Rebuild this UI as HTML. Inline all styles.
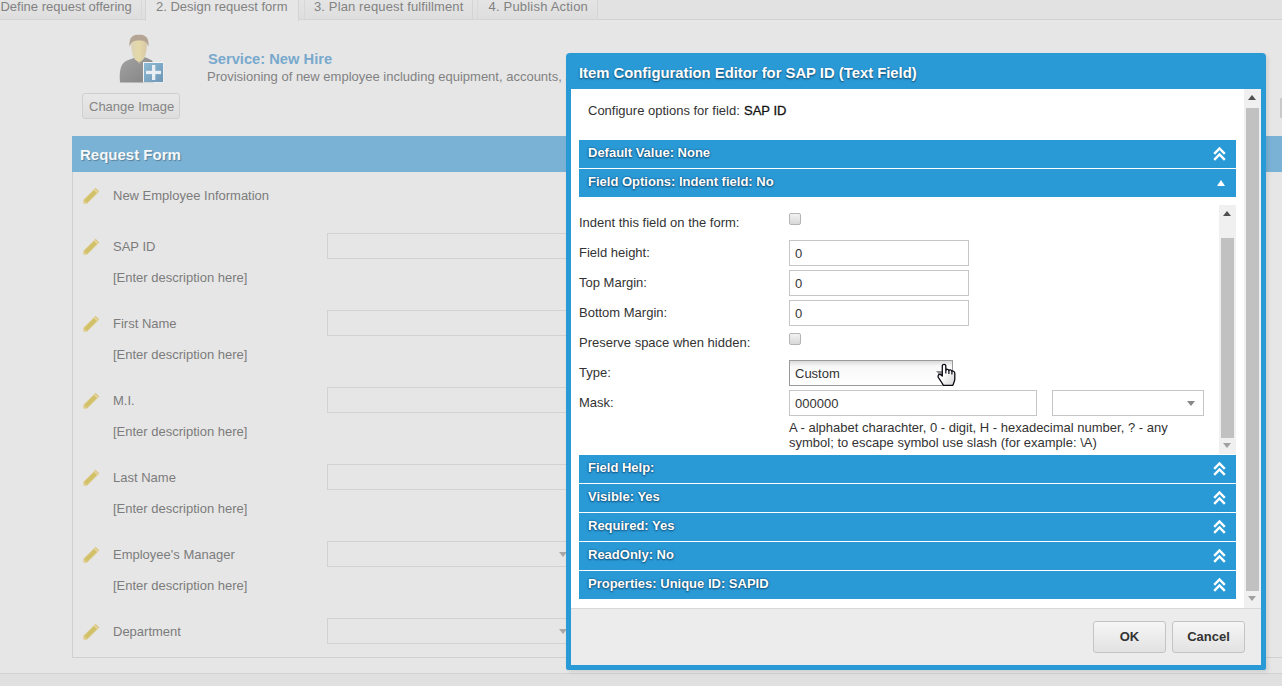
<!DOCTYPE html>
<html><head><meta charset="utf-8">
<style>
*{box-sizing:border-box;margin:0;padding:0}
html,body{width:1282px;height:686px;overflow:hidden}
body{background:#e6e6e6;font-family:"Liberation Sans",sans-serif;font-size:13px;position:relative;color:#7a7a7a}
.a{position:absolute}
.t{position:absolute;white-space:nowrap;font-size:13px;line-height:15px}
.b{font-weight:bold}
/* tabs */
#tabbar{position:absolute;left:0;top:0;width:1282px;height:20px;background:#e2e2e2;border-bottom:1px solid #d2d2d2}
.tab{position:absolute;top:0;height:20px;background:linear-gradient(#e4e4e4,#dedede);border:1px solid #d4d4d4;border-top:none}
.tabin{position:absolute;top:0;bottom:0;border-left:1px solid #d8d8d8}
.tabt{color:#828282}
/* left */
.lbl{color:#7c7c7c}
.inp{position:absolute;left:327px;width:260px;height:26px;border:1px solid #d2d2d2;background:#e6e6e6}
.sarr{position:absolute;width:0;height:0;border-left:4px solid transparent;border-right:4px solid transparent;border-top:5px solid #a8a8a8}
.pen{position:absolute;left:83px;width:17px;height:17px}
/* dialog */
#dlg{position:absolute;left:566px;top:53px;width:700px;height:617px;background:#2a9ad6;border-radius:4px 4px 2px 2px;box-shadow:2px 2px 4px rgba(0,0,0,.10)}
#dtitle{left:579px;top:64.5px;font-size:14.82px;line-height:17px;color:#fff;font-weight:bold;text-shadow:0 1px 2px rgba(10,50,80,.9)}
#content{position:absolute;left:571px;top:89px;width:690px;height:519px;background:#fff}
#footer{position:absolute;left:571px;top:608px;width:690px;height:57px;background:#ececec;border-top:1px solid #d8d8d8}
.hdr{position:absolute;left:579px;width:657px;height:28px;background:#2a9ad6}
.hdrt{position:absolute;left:9px;top:5px;font-size:13px;line-height:15px;font-weight:bold;color:#fff;text-shadow:0 0 2px rgba(0,45,80,.75),0 1px 2px rgba(0,45,80,.6);white-space:nowrap}
.dl{color:#333}
.din{position:absolute;left:789px;width:180px;height:26px;border:1px solid #c6c6c6;background:#fff}
.din span{position:absolute;left:5px;top:5px;font-size:13px;line-height:15px;color:#333}
.cb{position:absolute;left:789px;width:12px;height:12px;border:1px solid #b4b4b4;border-radius:2px;background:linear-gradient(#f2f2f2,#d8d8d8)}
.btn{position:absolute;top:621px;width:73px;height:32px;border:1px solid #c4c4c4;border-radius:3px;background:linear-gradient(#f6f6f6,#e2e2e2);color:#333;font-weight:bold;font-size:13px;text-align:center;line-height:30px}
.dchev{position:absolute;left:1213px;width:13px;height:15px}
</style></head><body>

<!-- tab bar -->
<div id="tabbar"></div>
<div class="tab" style="left:-10px;width:156px"><div class="tabin" style="left:150px"></div></div>
<div class="a" style="left:145px;top:0;width:154px;height:21px;background:#e6e6e6;border-left:1px solid #d4d4d4;border-right:1px solid #d4d4d4"></div>
<div class="tab" style="left:298px;width:175px"><div class="tabin" style="left:5px"></div></div>
<div class="tab" style="left:472px;width:126px"><div class="tabin" style="left:4px"></div></div>
<div class="t tabt" style="left:-14px;top:-1.5px">1. Define request offering</div>
<div class="t tabt" style="left:156px;top:-1.5px">2. Design request form</div>
<div class="t tabt" style="left:314px;top:-1.5px;letter-spacing:0.13px">3. Plan request fulfillment</div>
<div class="t tabt" style="left:488.5px;top:-1.5px;letter-spacing:0.2px">4. Publish Action</div>

<!-- service header -->
<svg class="a" style="left:112px;top:30px" width="56" height="56" viewBox="0 0 56 56">
  <defs>
   <linearGradient id="bodyg" x1="0" y1="0" x2="1" y2="1"><stop offset="0" stop-color="#a2a2a2"/><stop offset="1" stop-color="#838383"/></linearGradient>
   <linearGradient id="plusg" x1="0" y1="0" x2="1" y2="1"><stop offset="0" stop-color="#8cbad4"/><stop offset="1" stop-color="#6f97b6"/></linearGradient>
   <linearGradient id="faceg" x1="0" y1="0" x2="1" y2="0"><stop offset="0" stop-color="#dcd2b8"/><stop offset="0.5" stop-color="#e4d9a8"/><stop offset="1" stop-color="#d8c8a8"/></linearGradient>
  </defs>
  <path d="M8 52.5 C7 41 8.5 33 15 30.5 L23 27.5 L34 27.5 L40 30.5 C42.5 34 42.5 42 41.5 52.5 Z" fill="url(#bodyg)"/>
  <path d="M22 27.5 L27.5 34 L33 27.5 Z" fill="#b8b0a0"/>
  <path d="M19 10 C19 24 21 30 27 32 C33 30 35 24 35 10 Z" fill="url(#faceg)"/>
  <path d="M17.5 17 C16.5 6 22 4.8 27 4.8 C32 4.8 37.5 6 36.5 17 C35 12 33 10.5 27 10.5 C21 10.5 19 12 17.5 17 Z" fill="#b3a494"/>
  <rect x="31" y="32" width="20.5" height="20.5" fill="#f2f4f6"/>
  <rect x="32" y="33" width="19" height="19" fill="url(#plusg)"/>
  <rect x="40" y="35" width="3.3" height="15" fill="#e8eef2"/>
  <rect x="34" y="40.8" width="15" height="3.3" fill="#e8eef2"/>
</svg>
<div class="a" style="left:82px;top:93px;width:98px;height:26px;border:1px solid #cfcfcf;border-radius:3px;background:linear-gradient(#e8e8e8,#dedede)"></div>
<div class="t" style="left:89px;top:99px;color:#858585">Change Image</div>
<div class="t b" style="left:208px;top:51px;font-size:14.7px;line-height:16px;color:#78a9cd">Service: New Hire</div>
<div class="t" style="left:207px;top:69px;color:#828282">Provisioning of new employee including equipment, accounts, and access</div>

<!-- request form panel -->
<div class="a" style="left:72px;top:136px;width:1300px;height:522px;border:1px solid #d0d0d0;border-top:none"></div>
<div class="a" style="left:72px;top:136px;width:1300px;height:36px;background:#7ab2d5"></div>
<div class="t b" style="left:80px;top:146px;font-size:15px;line-height:17px;color:#f4f8fb;text-shadow:1px 1px 1px #5a7f96">Request Form</div>
<div class="a" style="left:0;top:673px;width:1282px;height:13px;background:#e0e0e0;border-top:1px solid #d2d2d2"></div>

<svg class="pen" style="top:187px" width="17" height="17" viewBox="0 0 17 17"><path d="M0.5 16.5 L0.5 12.8 L12.6 0.7 L16.3 4.4 L4.2 16.5 Z" fill="#d9c67c"/><path d="M3 14 L12.2 4.8" stroke="#d0c066" stroke-width="3"/><path d="M11.2 2.1 L14.9 5.8" stroke="#e6d6a6" stroke-width="1.4"/><path d="M0.8 16.2 L0.8 13.6 L3.4 16.2 Z" fill="#e2cf8c"/></svg>
<div class="t lbl" style="left:113px;top:188px">New Employee Information</div>
<svg class="pen" style="top:238px" width="17" height="17" viewBox="0 0 17 17"><path d="M0.5 16.5 L0.5 12.8 L12.6 0.7 L16.3 4.4 L4.2 16.5 Z" fill="#d9c67c"/><path d="M3 14 L12.2 4.8" stroke="#d0c066" stroke-width="3"/><path d="M11.2 2.1 L14.9 5.8" stroke="#e6d6a6" stroke-width="1.4"/><path d="M0.8 16.2 L0.8 13.6 L3.4 16.2 Z" fill="#e2cf8c"/></svg>
<div class="t lbl" style="left:113px;top:239px">SAP ID</div>
<div class="t lbl" style="left:113px;top:270px">[Enter description here]</div>
<div class="inp" style="top:233px"></div>
<svg class="pen" style="top:315px" width="17" height="17" viewBox="0 0 17 17"><path d="M0.5 16.5 L0.5 12.8 L12.6 0.7 L16.3 4.4 L4.2 16.5 Z" fill="#d9c67c"/><path d="M3 14 L12.2 4.8" stroke="#d0c066" stroke-width="3"/><path d="M11.2 2.1 L14.9 5.8" stroke="#e6d6a6" stroke-width="1.4"/><path d="M0.8 16.2 L0.8 13.6 L3.4 16.2 Z" fill="#e2cf8c"/></svg>
<div class="t lbl" style="left:113px;top:316px">First Name</div>
<div class="t lbl" style="left:113px;top:347px">[Enter description here]</div>
<div class="inp" style="top:310px"></div>
<svg class="pen" style="top:392px" width="17" height="17" viewBox="0 0 17 17"><path d="M0.5 16.5 L0.5 12.8 L12.6 0.7 L16.3 4.4 L4.2 16.5 Z" fill="#d9c67c"/><path d="M3 14 L12.2 4.8" stroke="#d0c066" stroke-width="3"/><path d="M11.2 2.1 L14.9 5.8" stroke="#e6d6a6" stroke-width="1.4"/><path d="M0.8 16.2 L0.8 13.6 L3.4 16.2 Z" fill="#e2cf8c"/></svg>
<div class="t lbl" style="left:113px;top:393px">M.I.</div>
<div class="t lbl" style="left:113px;top:424px">[Enter description here]</div>
<div class="inp" style="top:387px"></div>
<svg class="pen" style="top:469px" width="17" height="17" viewBox="0 0 17 17"><path d="M0.5 16.5 L0.5 12.8 L12.6 0.7 L16.3 4.4 L4.2 16.5 Z" fill="#d9c67c"/><path d="M3 14 L12.2 4.8" stroke="#d0c066" stroke-width="3"/><path d="M11.2 2.1 L14.9 5.8" stroke="#e6d6a6" stroke-width="1.4"/><path d="M0.8 16.2 L0.8 13.6 L3.4 16.2 Z" fill="#e2cf8c"/></svg>
<div class="t lbl" style="left:113px;top:470px">Last Name</div>
<div class="t lbl" style="left:113px;top:501px">[Enter description here]</div>
<div class="inp" style="top:464px"></div>
<svg class="pen" style="top:546px" width="17" height="17" viewBox="0 0 17 17"><path d="M0.5 16.5 L0.5 12.8 L12.6 0.7 L16.3 4.4 L4.2 16.5 Z" fill="#d9c67c"/><path d="M3 14 L12.2 4.8" stroke="#d0c066" stroke-width="3"/><path d="M11.2 2.1 L14.9 5.8" stroke="#e6d6a6" stroke-width="1.4"/><path d="M0.8 16.2 L0.8 13.6 L3.4 16.2 Z" fill="#e2cf8c"/></svg>
<div class="t lbl" style="left:113px;top:547px">Employee's Manager</div>
<div class="t lbl" style="left:113px;top:578px">[Enter description here]</div>
<div class="inp" style="top:541px"></div>
<div class="sarr" style="left:559px;top:552px"></div>
<svg class="pen" style="top:623px" width="17" height="17" viewBox="0 0 17 17"><path d="M0.5 16.5 L0.5 12.8 L12.6 0.7 L16.3 4.4 L4.2 16.5 Z" fill="#d9c67c"/><path d="M3 14 L12.2 4.8" stroke="#d0c066" stroke-width="3"/><path d="M11.2 2.1 L14.9 5.8" stroke="#e6d6a6" stroke-width="1.4"/><path d="M0.8 16.2 L0.8 13.6 L3.4 16.2 Z" fill="#e2cf8c"/></svg>
<div class="t lbl" style="left:113px;top:624px">Department</div>
<div class="inp" style="top:618px"></div>
<div class="sarr" style="left:559px;top:629px"></div>

<div class="a" style="left:1280px;top:98px;width:2px;height:20px;background:#c9c9c9;border-radius:1px 0 0 1px"></div>
<!-- dialog -->
<div id="dlg"></div>
<div class="t" id="dtitle">Item Configuration Editor for SAP ID (Text Field)</div>
<div id="content"></div>
<div id="footer"></div>
<div class="t dl" style="left:588px;top:103px">Configure options for field:</div>
<div class="t dl" style="left:744px;top:103px;color:#111;-webkit-text-stroke:0.3px #111">SAP ID</div>
<div class="a" style="left:1244px;top:89px;width:17px;height:519px;background:#f0f0f0"></div>
<div class="a" style="left:1246px;top:108px;width:13px;height:483px;background:#c1c1c1"></div>
<div class="sarr" style="left:1248px;top:95px;border-top:none;border-bottom:5px solid #505050"></div>
<div class="sarr" style="left:1248px;top:596px;border-top-color:#a0a0a0"></div>
<div class="hdr" style="top:140px"><div class="hdrt">Default Value: None</div></div><svg class="dchev" style="top:146px" width="13" height="15" viewBox="0 0 13 15"><path d="M1.2 7.8 L6.5 2.5 L11.8 7.8 M1.2 13.8 L6.5 8.5 L11.8 13.8" stroke="#fff" stroke-width="2.4" fill="none"/></svg>
<div class="hdr" style="top:169px"><div class="hdrt">Field Options: Indent field: No</div></div><div class="a" style="left:1217px;top:180px;width:0;height:0;border-left:4.5px solid transparent;border-right:4.5px solid transparent;border-bottom:6px solid #fff"></div>
<div class="a" style="left:1219px;top:205px;width:17px;height:249px;background:#f0f0f0"></div>
<div class="a" style="left:1221px;top:238px;width:13px;height:200px;background:#c1c1c1"></div>
<div class="sarr" style="left:1223px;top:211px;border-top:none;border-bottom:5px solid #505050"></div>
<div class="sarr" style="left:1223px;top:443px;border-top-color:#a0a0a0"></div>
<div class="t dl" style="left:579px;top:214.5px">Indent this field on the form:</div>
<div class="t dl" style="left:579px;top:244.5px">Field height:</div>
<div class="t dl" style="left:579px;top:274.5px">Top Margin:</div>
<div class="t dl" style="left:579px;top:304.5px">Bottom Margin:</div>
<div class="t dl" style="left:579px;top:334.5px">Preserve space when hidden:</div>
<div class="t dl" style="left:579px;top:364.5px">Type:</div>
<div class="t dl" style="left:579px;top:394.5px">Mask:</div>
<div class="cb" style="top:213px"></div>
<div class="cb" style="top:333px"></div>
<div class="din" style="top:240px"><span>0</span></div>
<div class="din" style="top:270px"><span>0</span></div>
<div class="din" style="top:300px"><span>0</span></div>
<div class="din" style="top:360px;width:164px;border-color:#9a9a9a;background:linear-gradient(#dadada,#f8f8f8 22%,#fff)"><span>Custom</span></div>
<div class="din" style="top:390px;width:248px"><span>000000</span></div>
<div class="din" style="left:1052px;top:390px;width:152px"></div>
<div class="sarr" style="left:1187px;top:401px;border-top-color:#888"></div>
<div class="t dl" style="left:789px;top:419.5px">A - alphabet charachter, 0 - digit, H - hexadecimal number, ? - any</div>
<div class="t dl" style="left:789px;top:434.5px">symbol; to escape symbol use slash (for example: \A)</div>
<div class="sarr" style="left:936px;top:371px;border-top-color:#8c8c8c"></div>
<svg class="a" style="left:930px;top:356px" width="32" height="34" viewBox="0 0 32 34"><defs><linearGradient id="hg" x1="0" y1="0" x2="1" y2="1"><stop offset="0.4" stop-color="#fff"/><stop offset="1" stop-color="#d4d4d4"/></linearGradient></defs><path d="M12.3 18 L12.3 9.8 C12.3 7.8 15.8 7.8 15.8 9.8 L15.8 14.2 C16.2 12.9 18.6 12.9 18.9 14.6 C19.3 13.6 21.6 13.6 21.9 15.4 C22.4 14.6 24.8 15.2 24.8 17.2 L24.8 23 C24.8 25.2 23.6 27.2 22.8 29.3 L13.3 29.3 C12.2 27 10.2 24.2 8.4 21.6 C7.6 20.2 8.3 18.3 9.8 18.4 C10.8 18.5 11.6 19.2 12.3 20 Z" fill="url(#hg)" stroke="#0a0a14" stroke-width="1.3" stroke-linejoin="round"/><path d="M15.8 14.2 L15.8 17.6 M18.9 14.6 L18.9 18 M21.9 15.4 L21.9 18.5" stroke="#0a0a14" stroke-width="1.2"/></svg>
<div class="hdr" style="top:455px"><div class="hdrt">Field Help:</div></div><svg class="dchev" style="top:461px" width="13" height="15" viewBox="0 0 13 15"><path d="M1.2 7.8 L6.5 2.5 L11.8 7.8 M1.2 13.8 L6.5 8.5 L11.8 13.8" stroke="#fff" stroke-width="2.4" fill="none"/></svg>
<div class="hdr" style="top:484px"><div class="hdrt">Visible: Yes</div></div><svg class="dchev" style="top:490px" width="13" height="15" viewBox="0 0 13 15"><path d="M1.2 7.8 L6.5 2.5 L11.8 7.8 M1.2 13.8 L6.5 8.5 L11.8 13.8" stroke="#fff" stroke-width="2.4" fill="none"/></svg>
<div class="hdr" style="top:513px"><div class="hdrt">Required: Yes</div></div><svg class="dchev" style="top:519px" width="13" height="15" viewBox="0 0 13 15"><path d="M1.2 7.8 L6.5 2.5 L11.8 7.8 M1.2 13.8 L6.5 8.5 L11.8 13.8" stroke="#fff" stroke-width="2.4" fill="none"/></svg>
<div class="hdr" style="top:542px"><div class="hdrt">ReadOnly: No</div></div><svg class="dchev" style="top:548px" width="13" height="15" viewBox="0 0 13 15"><path d="M1.2 7.8 L6.5 2.5 L11.8 7.8 M1.2 13.8 L6.5 8.5 L11.8 13.8" stroke="#fff" stroke-width="2.4" fill="none"/></svg>
<div class="hdr" style="top:571px"><div class="hdrt">Properties: Unique ID: SAPID</div></div><svg class="dchev" style="top:577px" width="13" height="15" viewBox="0 0 13 15"><path d="M1.2 7.8 L6.5 2.5 L11.8 7.8 M1.2 13.8 L6.5 8.5 L11.8 13.8" stroke="#fff" stroke-width="2.4" fill="none"/></svg>
<div class="btn" style="left:1093px">OK</div>
<div class="btn" style="left:1172px">Cancel</div>

</body></html>
